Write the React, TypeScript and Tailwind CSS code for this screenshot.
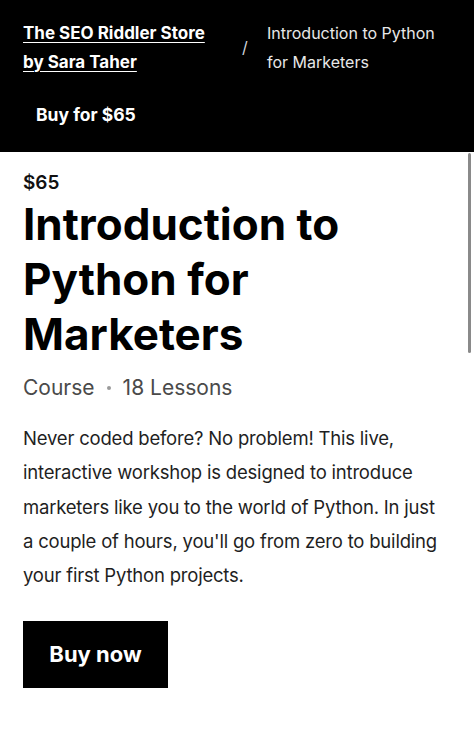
import React from 'react'

export default function App() {
  return (
    <div
      className="relative w-[474px] h-[732px] overflow-hidden bg-white"
      style={{ fontFamily: 'Inter, "Noto Sans", sans-serif' }}
    >
      {/* header */}
      <div className="bg-black text-white h-[152px] pt-[19px] px-[23px]">
        <div className="flex items-start">
          <div className="w-[200px] text-[17px] font-bold leading-[29px] underline underline-offset-[3px]">
            The SEO Riddler Store
            <br />
            by Sara Taher
          </div>
          <div className="w-[44px] pt-[14px] text-center text-[16px] leading-[29px] text-gray-300">/</div>
          <div className="text-[16px] leading-[29px] text-[#e8e8e8]">
            Introduction to Python
            <br />
            for Marketers
          </div>
        </div>
        <div className="mt-[26px] pl-[13px] text-[17.5px] font-bold leading-[24px]">Buy for $65</div>
      </div>

      {/* scrollbar */}
      <div className="absolute right-[3px] top-[153px] w-[3px] h-[200px] rounded-full bg-[#8a8a8a]" />

      {/* body */}
      <div className="px-[23px] pt-[20px]">
        <div className="text-[19px] font-semibold leading-[22px] text-[#111]">$65</div>
        <h1 className="mt-[3px] text-[44px] font-bold leading-[55px] text-black">
          Introduction to
          <br />
          Python for
          <br />
          Marketers
        </h1>
        <div className="mt-[12px] flex items-center text-[21px] leading-[28px] text-[#4a4a4a]">
          <span>Course</span>
          <span className="mx-[12px] w-[4px] h-[4px] rounded-full bg-[#9a9a9a]" />
          <span>18 Lessons</span>
        </div>
        <p className="mt-[19px] whitespace-nowrap text-[18.5px] tracking-[-0.2px] leading-[34.3px] text-[#1f1f1f]">
          Never coded before? No problem! This live,
          <br />
          interactive workshop is designed to introduce
          <br />
          marketers like you to the world of Python. In just
          <br />
          a couple of hours, you'll go from zero to building
          <br />
          your first Python projects.
        </p>
        <button className="mt-[29px] w-[145px] h-[67px] bg-black text-white text-[22px] font-bold">Buy now</button>
      </div>
    </div>
  )
}
